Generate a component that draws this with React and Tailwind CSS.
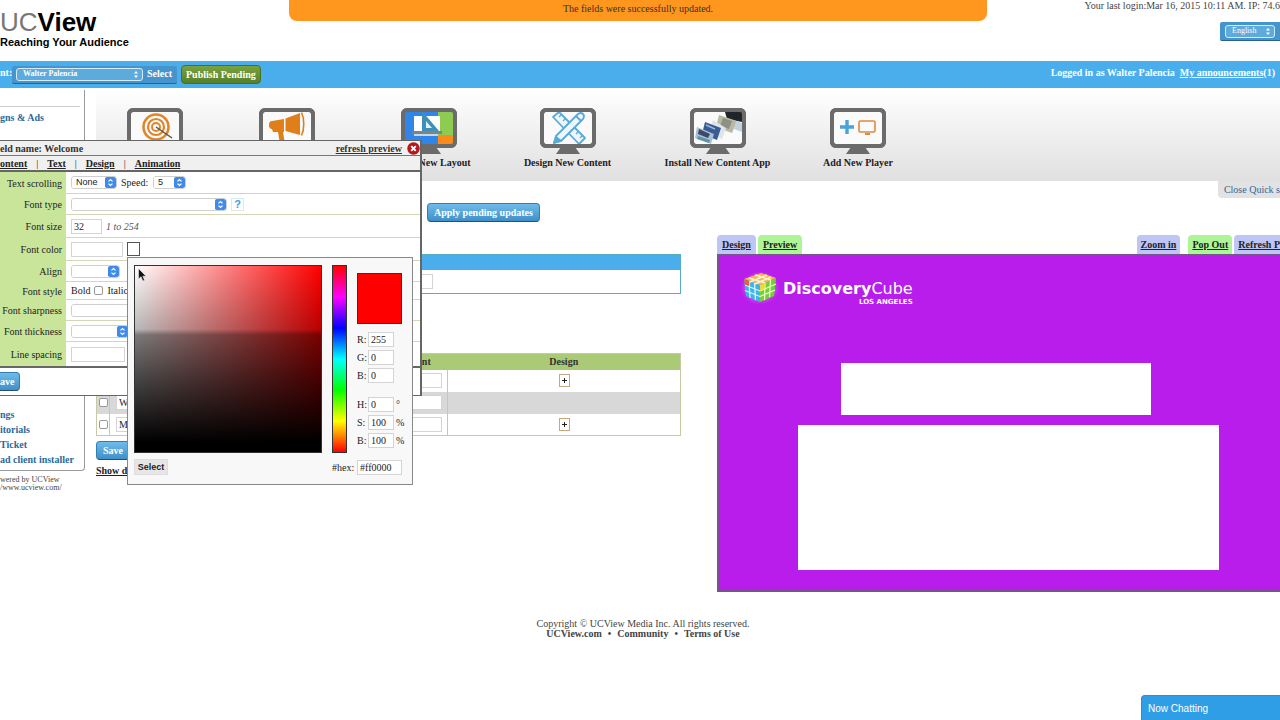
import React from "react";

const blueButton =
  "rounded-sm border border-[#2f7fb5] border-b-[#28506b] bg-linear-to-b from-[#6fbcea] to-[#3f8fc8] font-bold text-white whitespace-nowrap";

function Monitor({ children }) {
  return (
    <svg width="58" height="48" viewBox="0 0 58 48" aria-hidden="true">
      <rect x="3" y="3" width="52" height="36" rx="4" fill="#fafafa" stroke="#6b6b6b" strokeWidth="4" />
      {children}
      <rect x="3" y="3" width="52" height="36" rx="4" fill="none" stroke="#6b6b6b" strokeWidth="4" />
      <path d="M22 40h14l5 7H17z" fill="#6b6b6b" />
    </svg>
  );
}

function TargetIcon() {
  return (
    <Monitor>
      <g fill="none" stroke="#e0862a">
        <circle cx="30" cy="20" r="12.5" strokeWidth="2.6" />
        <circle cx="30" cy="20" r="8" strokeWidth="2.2" />
        <circle cx="30" cy="20" r="4" strokeWidth="2" />
      </g>
      <path d="M30 20l16 11" stroke="#555" strokeWidth="1.5" />
    </Monitor>
  );
}

function MegaphoneIcon() {
  return (
    <Monitor>
      <g fill="#df7f1a">
        <path d="M14 14l12-2v13h-1l2 12h-5l-2-12h-5l-1-3q-3 0-3-4t3-4z" />
        <path d="M27.500 11.500L42 6v22l-14.500-4z" />
        <path d="M43.500 5.500c3 6 3 17 0 23" fill="none" stroke="#df7f1a" strokeWidth="1.6" />
      </g>
    </Monitor>
  );
}

function LayoutIcon() {
  return (
    <Monitor>
      <rect x="5" y="5" width="34" height="32" fill="#2f86e8" />
      <rect x="38" y="5" width="15" height="23" fill="#8ecb52" />
      <rect x="38" y="28" width="15" height="9" fill="#fb8c1c" />
      <rect x="14" y="9" width="26" height="16" fill="#fff" />
      <path d="M22 4l17 20H22z" fill="#3f8fb8" />
      <path d="M26 14l6 7h-6z" fill="#dff0f8" />
      <rect x="12" y="24" width="30" height="3" fill="#7d8489" />
      <path d="M14 27h24v2H14z" fill="#c9d6de" />
    </Monitor>
  );
}

function DesignIcon() {
  return (
    <Monitor>
      <g stroke="#5aa9d8" strokeWidth="1.800" strokeLinejoin="round">
        <path d="M14 10l6-5 26 26-6 6z" fill="#eef6fb" />
        <path d="M20 10l2-2M24 14l3-3M28 18l2-2M33 23l3-3M37 27l2-2M41 31l3-3" strokeWidth="1.300" />
        <path d="M15 36l2-7L39 7q3-2 5 0t0 5L22 34z" fill="#eef6fb" />
        <path d="M15 36l2-6 5 4z" fill="#5aa9d8" />
        <path d="M37 9l5 5" />
      </g>
    </Monitor>
  );
}

function AppIcon() {
  return (
    <Monitor>
      <path d="M36 5h17v10l-15-3z" fill="#20242b" />
      <path d="M30 8l18 6-5 12-16-6z" fill="#b9b8a4" />
      <path d="M34 11l9 3-3 8-9-3z" fill="#8d9083" />
      <path d="M47 14l6 2v9l-8-3z" fill="#c5d0dd" />
      <path d="M24 13l13 8-4 11-14-6z" fill="#dfe4ea" />
      <path d="M16 15l16 6-4 12-15-6z" fill="#3b5c92" />
      <path d="M8 20l17 7-3 10-16-6z" fill="#a8bfd5" />
      <path d="M10 22l11 5-2 4-10-4z" fill="#3c4a66" />
      <path d="M9 29l12 4-1 3-12-4z" fill="#5f93a5" />
      <path d="M17 18l9 4" stroke="#9bb4d8" strokeWidth="1.500" />
    </Monitor>
  );
}

function PlayerIcon() {
  return (
    <Monitor>
      <path d="M18 13v14M11 20h14" stroke="#4ba3dc" strokeWidth="3.400" />
      <rect x="30" y="14" width="16" height="11" rx="1.500" fill="none" stroke="#df8a3d" strokeWidth="1.600" />
      <path d="M36 27h5" stroke="#df8a3d" strokeWidth="2" />
    </Monitor>
  );
}

const shortcuts = [
  { Icon: TargetIcon, label: "", width: "w-[66px]" },
  { Icon: MegaphoneIcon, label: "", width: "w-[98px]" },
  { Icon: LayoutIcon, label: "Create New Layout", width: "w-[86px]" },
  { Icon: DesignIcon, label: "Design New Content", width: "w-[91px]" },
  { Icon: AppIcon, label: "Install New Content App", width: "w-[109px]" },
  { Icon: PlayerIcon, label: "Add New Player", width: "w-[72px]" },
];

function Stepper() {
  return (
    <svg className="h-full w-[11px] shrink-0" viewBox="0 0 11 13" preserveAspectRatio="none" aria-hidden="true">
      <rect width="11" height="13" rx="2" fill="#3f8bea" />
      <path d="M3.500 5.200l2-2.200 2 2.200M3.500 7.800l2 2.200 2-2.200" fill="none" stroke="#fff" strokeWidth="1.200" />
    </svg>
  );
}

function Select({ label, value, width }) {
  return (
    <span className={`flex h-[13px] overflow-hidden rounded-[3px] border border-[#cfcfcf] bg-white ${width}`}>
      <select
        aria-label={label}
        className="min-w-0 flex-1 appearance-none bg-white pl-1 font-['Liberation_Sans',sans-serif] text-[9px] leading-[11px] text-[#222] outline-none"
      >
        <option>{value}</option>
      </select>
      <Stepper />
    </span>
  );
}

function Box({ id, label, value = "", className = "" }) {
  return (
    <input
      id={id}
      aria-label={label}
      defaultValue={value}
      className={`h-[15px] border border-[#d4d4d4] bg-white px-0.5 text-[10px] leading-3 text-[#222] outline-none ${className}`}
    />
  );
}

function Row({ label, height, children, last }) {
  return (
    <div className={`flex ${height}`}>
      <div className="flex w-[66px] shrink-0 items-center justify-end bg-[#c8e59a] pr-1 whitespace-nowrap">{label}</div>
      <div className={`flex flex-1 items-center gap-1 pl-[5px] ${last ? "" : "border-b border-[#d5d5b8]"}`}>{children}</div>
    </div>
  );
}

function FieldDialog() {
  return (
    <section className="absolute top-[140px] left-0 w-[422px] border-y border-r-2 border-[#666] bg-white text-[10px] text-[#222]">
      <div className="flex h-[15px] items-center justify-between border-b border-[#777] bg-[#f0f0f0] font-bold text-[#333]">
        <h2>eld name: Welcome</h2>
        <div className="flex items-center gap-[5px]">
          <a href="#refresh" className="underline">refresh preview</a>
          <button aria-label="Close" className="block">
            <svg width="13" height="13" viewBox="0 0 13 13">
              <circle cx="6.500" cy="6.500" r="6.200" fill="#b8151c" />
              <path d="M4.200 4.200l4.600 4.600M8.800 4.200L4.200 8.800" stroke="#fff" strokeWidth="1.900" />
            </svg>
          </button>
        </div>
      </div>
      <nav className="flex h-[16px] items-center border-b-2 border-[#666] bg-[#f0f0f0] font-bold text-[#222]">
        <a href="#content" className="underline">ontent</a>
        <span className="w-5 text-center font-normal">|</span>
        <a href="#text" className="underline">Text</a>
        <span className="w-5 text-center font-normal">|</span>
        <a href="#design" className="underline">Design</a>
        <span className="w-5 text-center font-normal">|</span>
        <a href="#animation" className="underline">Animation</a>
      </nav>
      <Row label="Text scrolling" height="h-[22px]">
        <Select label="Text scrolling" value="None" width="w-[46px]" />
        <span className="w-7">Speed:</span>
        <Select label="Speed" value="5" width="w-[33px]" />
      </Row>
      <Row label="Font type" height="h-[21px]">
        <Select label="Font type" value="" width="w-[156px]" />
        <button aria-label="Help" className="h-[13px] w-[13px] border border-[#dde7ee] text-center font-['Liberation_Sans',sans-serif] text-[11px] leading-[11px] font-bold text-[#3ba0d8]">?</button>
      </Row>
      <Row label="Font size" height="h-[23px]">
        <Box label="Font size" value="32" className="w-[31px]" />
        <em className="text-[#555]">1 to 254</em>
      </Row>
      <Row label="Font color" height="h-[23px]">
        <Box label="Font color" className="w-[52px]" />
        <button aria-label="Pick font color" className="h-[14px] w-[13px] border border-[#555] bg-white" />
      </Row>
      <Row label="Align" height="h-[21px]">
        <Select label="Align" value="" width="w-[49px]" />
      </Row>
      <Row label="Font style" height="h-[18px]">
        <label htmlFor="bold">Bold</label>
        <input id="bold" type="checkbox" className="h-[9px] w-[9px] appearance-none rounded-xs border border-[#999] bg-white" />
        <span>Italic</span>
      </Row>
      <Row label="Font sharpness" height="h-[21px]">
        <Select label="Font sharpness" value="" width="w-[80px]" />
      </Row>
      <Row label="Font thickness" height="h-[21px]">
        <Select label="Font thickness" value="" width="w-[58px]" />
      </Row>
      <Row label="Line spacing" height="h-[24px]" last>
        <Box label="Line spacing" className="w-[54px]" />
      </Row>
      <div className="flex h-[29px] items-center border-t-2 border-[#666]">
        <button className={`${blueButton} h-[19px] rounded-l-none border-l-0 pr-[5px] leading-4`}>ave</button>
      </div>
    </section>
  );
}

function Channel({ id, name, value, unit }) {
  return (
    <div className="flex h-[18px] items-center">
      <label htmlFor={id} className="w-[11px]">{name}:</label>
      <Box id={id} value={value} className="w-[26px]" />
      {unit && <span className="pl-0.5">{unit}</span>}
    </div>
  );
}

function ColorPicker() {
  return (
    <section className="absolute top-[257px] left-[127px] flex w-[286px] flex-col gap-[6px] border border-[#888] bg-[#f8f8f8] px-1.5 pt-[7px] pb-[9px] text-[10px] text-[#222]">
      <div className="flex gap-[10px]">
        <div className="relative h-[188px] w-[188px] border border-[#333] bg-[linear-gradient(to_bottom,rgba(0,0,0,0)_0%,rgba(0,0,0,.28)_34%,rgba(0,0,0,.52)_37%,rgba(0,0,0,.72)_60%,#000_95%),linear-gradient(to_right,#fff,#f00)]">
          <svg className="absolute top-0.5 left-[3px]" width="9" height="14" viewBox="0 0 9 14" aria-hidden="true">
            <path d="M.5.5v10.500l2.500-2.300 1.800 4.300 1.800-.8-1.800-4H8z" fill="#111" stroke="#eee" strokeWidth=".6" />
          </svg>
        </div>
        <div className="h-[188px] w-[15px] border border-[#333] bg-[linear-gradient(to_bottom,#f00,#f0f,#00f,#0ff,#0f0,#ff0,#f00)]" />
        <div className="flex flex-col pt-2">
          <div className="mb-[6px] h-[51px] w-[45px] border border-[#333] bg-[#f00]" />
          <Channel id="red" name="R" value="255" />
          <Channel id="green" name="G" value="0" />
          <Channel id="blue" name="B" value="0" />
          <div className="h-[11px]" />
          <Channel id="hue" name="H" value="0" unit="°" />
          <Channel id="sat" name="S" value="100" unit="%" />
          <Channel id="bri" name="B" value="100" unit="%" />
        </div>
      </div>
      <div className="flex items-center justify-between pr-1">
        <button className="h-4 w-[34px] border border-[#ddd] bg-[#e6e6e6] font-['Liberation_Sans',sans-serif] text-[9px] leading-3 font-bold">Select</button>
        <div className="flex items-center">
          <label htmlFor="hex" className="w-[25px]">#hex:</label>
          <Box id="hex" value="#ff0000" className="w-[45px]" />
        </div>
      </div>
    </section>
  );
}

function FieldsTable() {
  const rows = [
    { name: "Welcome", plus: true, shade: "bg-white" },
    { name: "W", plus: false, shade: "bg-[#d8d8d8]" },
    { name: "M", plus: true, shade: "bg-white" },
  ];
  return (
    <table className="mt-[59px] w-full table-fixed border-collapse border border-[#c9c9a4]">
      <colgroup>
        <col className="w-[13px]" />
        <col className="w-[270px]" />
        <col className="w-[68px]" />
        <col />
      </colgroup>
      <thead>
        <tr className="h-4 bg-[#abca76] text-[#333]">
          <th />
          <th />
          <th className="font-bold leading-[15px]">Content</th>
          <th className="font-bold leading-[15px]">Design</th>
        </tr>
      </thead>
      <tbody>
        {rows.map((row, i) => (
          <tr key={i} className={`h-[22px] ${row.shade}`}>
            <td className="border-r border-[#c9c9a4] pl-0.5">
              <input type="checkbox" aria-label={`Choose ${row.name}`} className="block h-[9px] w-[9px] appearance-none rounded-xs border border-[#999] bg-white" />
            </td>
            <td className="pl-1.5">
              <Box label="Name" value={row.name} className="block w-[200px]" />
            </td>
            <td className="border-r border-[#c9c9a4] pl-1.5">
              <Box label="Content" className="block w-14" />
            </td>
            <td>
              {row.plus && (
                <button aria-label="Expand" className="mx-auto block h-[13px] w-[11px] border border-[#c9a67c] bg-white">
                  <svg width="9" height="11" viewBox="0 0 9 11"><path d="M4.500 3v5M2 5.500h5" stroke="#222" /></svg>
                </button>
              )}
            </td>
          </tr>
        ))}
      </tbody>
    </table>
  );
}

function CubeLogo() {
  return (
    <svg width="42" height="38" viewBox="0 0 42 38" aria-hidden="true">
      <defs>
        <radialGradient id="halo"><stop offset=".5" stopColor="#f4b6ff" stopOpacity=".8" /><stop offset="1" stopColor="#b81deb" stopOpacity="0" /></radialGradient>
      </defs>
      <ellipse cx="21" cy="18" rx="21" ry="18" fill="url(#halo)" />
      <path d="M5 9l17-6 15 5-16 7z" fill="#f7b55a" />
      <path d="M5 9l16 6v17L7 26z" fill="#3cb5e8" />
      <path d="M21 15l16-7-2 18-14 6z" fill="#74cf3c" />
      <path d="M10 8l16 5M16 5l16 5M11 12l17-7M16 14l16-7" stroke="#fff3d0" strokeWidth="1.400" />
      <path d="M10 11l1 17M15.500 13l1 17M6 15l15 6M6 20.500l15 6" stroke="#d9f4ff" strokeWidth="1.300" />
      <path d="M26 13l-.5 17M31.500 10.500L30.500 27M21 21l16-7M21 26.500L36 20" stroke="#eaffc0" strokeWidth="1.300" />
      <path d="M21 15l5-2-.5 6-4.500 2z" fill="#f2d93b" />
      <path d="M5 9l5 2v5l-4-1.500z" fill="#e8632d" />
    </svg>
  );
}

function Tab({ color, children, className = "px-[5px]" }) {
  return (
    <a href="#tab" className={`flex h-[19px] items-center rounded-t-[4px] font-bold whitespace-nowrap text-[#222] underline ${color} ${className}`}>
      {children}
    </a>
  );
}

function Preview() {
  return (
    <section className="mt-[37px] min-w-0 flex-1">
      <div className="flex">
        <Tab color="bg-[#bec6f6]" className="mr-0.5 px-[5px]">Design</Tab>
        <Tab color="bg-[#aef598]">Preview</Tab>
        <Tab color="bg-[#bec6f6]" className="mr-2 ml-auto px-1">Zoom in</Tab>
        <Tab color="bg-[#aef598]" className="mr-0.5 px-1">Pop Out</Tab>
        <Tab color="bg-[#bec6f6]" className="rounded-tr-none pl-1">Refresh P</Tab>
      </div>
      <div className="h-[338px] border-y-2 border-l-2 border-[#75558a] bg-[#b81deb] pt-[14px]">
        <div className="ml-5 flex h-[38px] items-start gap-0.5 font-['DejaVu_Sans',sans-serif] text-white">
          <CubeLogo />
          <div className="pt-[9px]">
            <p className="text-[16px] leading-[19px]"><b>Discovery</b>Cube</p>
            <p className="text-right text-[7px] leading-[9px] font-bold">LOS ANGELES</p>
          </div>
        </div>
        <div className="mt-[55px] ml-[122px] h-[52px] w-[310px] bg-white" />
        <div className="mt-[10px] ml-[79px] h-[145px] w-[421px] bg-white" />
      </div>
    </section>
  );
}

function GlassSelect({ label, value, width }) {
  return (
    <span className={`flex h-[13px] items-center rounded-[3px] border border-[#d5ecfa] bg-[#5cabdc] ${width}`}>
      <select aria-label={label} className="min-w-0 flex-1 appearance-none pl-1.5 text-[8px] leading-[10px] text-white outline-none">
        <option>{value}</option>
      </select>
      <svg className="mr-0.5 shrink-0" width="8" height="9" viewBox="0 0 8 9" aria-hidden="true">
        <path d="M2 3.500L4 1l2 2.500zM2 5.500L4 8l2-2.500z" fill="#fff" />
      </svg>
    </span>
  );
}

export default function App() {
  return (
    <div className="relative min-h-screen overflow-hidden bg-white font-['Liberation_Serif',serif] text-[10px] leading-[13px] text-[#222]">
      <header className="flex h-[61px] justify-between">
        <div className="pt-2 font-['Liberation_Sans',sans-serif] font-bold text-black">
          <h1 className="text-[26px] leading-[28px]"><span className="font-normal text-[#777]">UC</span>View</h1>
          <p className="text-[11px] leading-[12px]">Reaching Your Audience</p>
        </div>
        <div className="flex flex-col items-end">
          <p className="leading-3 text-[#444]">Your last login:Mar 16, 2015 10:11 AM. IP: 74.6</p>
          <div className="mt-[10px] flex h-[19px] w-[60px] items-center rounded-l-xs border-b border-[#2a648c] bg-[#4594cb] pl-[5px]">
            <GlassSelect label="Language" value="English" width="w-[50px]" />
          </div>
        </div>
      </header>

      <div role="status" className="absolute top-0 left-[289px] flex h-[21px] w-[698px] justify-center rounded-b-lg bg-[#ff961e] pt-0.5 text-[#333]">
        The fields were successfully updated.
      </div>

      <div className="flex h-[27px] items-center justify-between bg-[#4aaeec] font-bold text-white">
        <div className="flex items-center">
          <span className="w-[12px] pb-1">nt:</span>
          <div className="flex h-[18px] w-[165px] items-center gap-1 rounded-xs border-b border-[#2a648c] bg-[#4594cb] pl-1">
            <GlassSelect label="Client" value="Walter Palencia" width="w-[127px]" />
            <button className="leading-3">Select</button>
          </div>
          <button className="ml-1 h-[19px] rounded-sm border border-[#4b6e25] bg-linear-to-b from-[#7ba23f] to-[#55802a] px-1 leading-4 whitespace-nowrap">Publish Pending</button>
        </div>
        <div className="flex items-center pb-1">
          <span className="mr-[5px]">Logged in as Walter Palencia</span>
          <a href="#announcements" className="underline">My announcements</a>
          <span className="mr-[5px]">(1)</span>
        </div>
      </div>

      <div className="flex">
        <aside className="w-24 shrink-0">
          <div className="mt-0.5 flex h-[381px] w-[85px] flex-col rounded-br-sm border-r border-b border-[#999] font-bold text-[#2a6b9b]">
            <div className="h-[17px] w-[80px] shrink-0 border-b border-[#ccc]" />
            <a href="#ads" className="mt-1">gns &amp; Ads</a>
            <div className="mt-auto flex flex-col gap-0.5 pb-1 whitespace-nowrap">
              <a href="#settings">ngs</a>
              <a href="#tutorials">itorials</a>
              <a href="#ticket">Ticket</a>
              <a href="#installer">ad client installer</a>
            </div>
          </div>
          <p className="mt-[5px] text-[8px] leading-2 text-[#444]">wered by UCView<br />/www.ucview.com/</p>
        </aside>

        <main className="min-w-0 flex-1">
          <nav className="flex h-[93px] gap-[50px] bg-linear-to-b from-white to-[#e0e0e0] pt-[19px] pl-[26px] font-bold text-[#222]">
            {shortcuts.map(({ Icon, label, width }, i) => (
              <a key={i} href="#shortcut" className={`flex flex-col items-center gap-px whitespace-nowrap ${width}`}>
                <Icon />
                {label}
              </a>
            ))}
          </nav>
          <div className="flex">
            <div className="w-[585px] shrink-0">
              <button className={`${blueButton} mt-[22px] ml-[331px] block h-[19px] px-1.5 leading-4`}>Apply pending updates</button>
              <div className="mt-8 border border-[#58acc8]">
                <div className="h-[15px] bg-[#4aaeec]" />
                <div className="flex h-[23px] items-center justify-end pr-[247px]">
                  <Box label="Layout name" className="w-[200px]" />
                </div>
              </div>
              <FieldsTable />
              <button className={`${blueButton} mt-[5px] block h-[19px] px-1.5 leading-4`}>Save</button>
              <a href="#details" className="mt-1 block font-bold underline">Show d</a>
            </div>
            <div className="ml-9 flex min-w-0 flex-1 flex-col">
              <a href="#quick" className="flex h-[17px] items-center self-end rounded-bl-sm bg-[#e2e2e2] pl-1.5 whitespace-nowrap text-[#3c6490]">Close Quick s</a>
              <Preview />
            </div>
          </div>
        </main>
      </div>

      <footer className="mt-[27px] pl-1.5 text-center leading-[10px] text-[#444]">
        <p>Copyright © UCView Media Inc. All rights reserved.</p>
        <div className="flex justify-center gap-1.5 font-bold">
          <a href="#home">UCView.com</a>
          <span>•</span>
          <a href="#community">Community</a>
          <span>•</span>
          <a href="#terms">Terms of Use</a>
        </div>
      </footer>

      <FieldDialog />
      <ColorPicker />

      <button className="absolute right-0 bottom-0 h-[25px] w-[139px] rounded-tl-sm border-t border-l border-[#4a86ad] bg-[#309ee6] pl-1.5 text-left font-['Liberation_Sans',sans-serif] text-[10px] text-white">Now Chatting</button>
    </div>
  );
}
